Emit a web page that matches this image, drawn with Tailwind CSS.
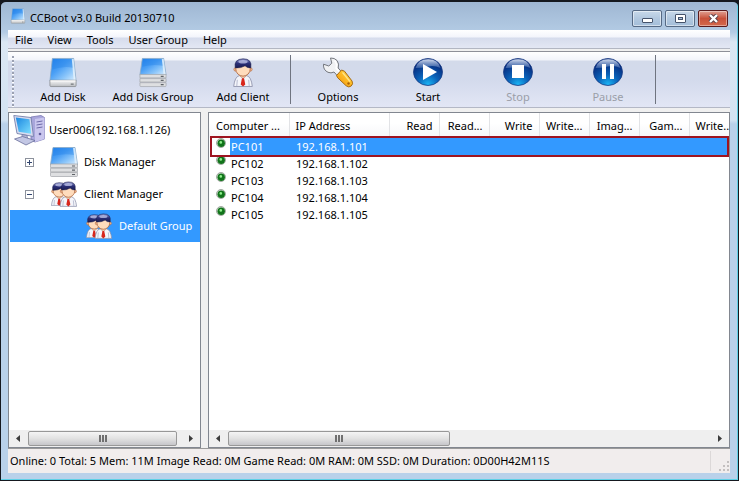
<!DOCTYPE html>
<html lang="en">

<head>
    <meta charset="UTF-8">
    <meta name="viewport" content="width=device-width, initial-scale=1.0">
    <title>CCBoot v3.0 Build 20130710</title>
    <script src="https://cdn.jsdelivr.net/npm/@tailwindcss/browser@4"></script>
</head>

<body class="bg-[#15181f] font-['Noto_Sans','Open_Sans',sans-serif] text-[11px] text-black">
    <!-- Shared icons -->
    <svg class="absolute h-0 w-0" aria-hidden="true">
        <defs>
            <linearGradient id="diskTop" x1="0" y1="0" x2="1" y2="1">
                <stop offset="0" stop-color="#1f80ec" />
                <stop offset=".4" stop-color="#4a9ff5" />
                <stop offset=".7" stop-color="#8cc6fa" />
                <stop offset="1" stop-color="#dcefff" />
            </linearGradient>
            <linearGradient id="diskFront" x1="0" y1="0" x2="0" y2="1">
                <stop offset="0" stop-color="#fafafa" />
                <stop offset="1" stop-color="#b9bcc0" />
            </linearGradient>
            <radialGradient id="orb" cx=".5" cy=".95" r=".8">
                <stop offset="0" stop-color="#19b4f4" />
                <stop offset=".45" stop-color="#0a62b8" />
                <stop offset="1" stop-color="#06297c" />
            </radialGradient>
            <linearGradient id="gloss" x1="0" y1="0" x2="0" y2="1">
                <stop offset="0" stop-color="#e8effa" stop-opacity=".9" />
                <stop offset="1" stop-color="#8fb0dc" stop-opacity=".35" />
            </linearGradient>
            <linearGradient id="hair" x1="0" y1="0" x2="0" y2="1">
                <stop offset="0" stop-color="#8c93cc" />
                <stop offset=".5" stop-color="#2b2f78" />
                <stop offset="1" stop-color="#1a1c50" />
            </linearGradient>
            <linearGradient id="handle" x1="0" y1="1" x2="1" y2="0">
                <stop offset="0" stop-color="#f08a00" />
                <stop offset=".6" stop-color="#ffc02a" />
                <stop offset="1" stop-color="#ffe07a" />
            </linearGradient>
            <linearGradient id="screen" x1="0" y1="0" x2="1" y2="1">
                <stop offset="0" stop-color="#1a86e0" />
                <stop offset="1" stop-color="#7fe0ff" />
            </linearGradient>
        </defs>
        <symbol id="disk" viewBox="0 0 30 32">
            <path d="M4 1.500h22l2.500 23h-27z" fill="url(#diskTop)" stroke="#8aa9c6" stroke-width=".8" />
            <path d="M24 2h2l2 22h-2z" fill="#e6f2fc" opacity=".8" />
            <path d="M5 2h19l1 9Q15 9 4 13z" fill="#1f7de6" opacity=".35" />
            <path d="M1.500 24h27v5.500q0 1-1 1h-25q-1 0-1-1z" fill="url(#diskFront)" stroke="#85888c" stroke-width=".8" />
            <path d="M2 24.600h26" stroke="#fff" />
            <path d="M23 28h3" stroke="#6c7075" stroke-width="1.200" />
        </symbol>
        <symbol id="disks" viewBox="0 0 30 32">
            <path d="M4 1.500h22l2.500 17h-27z" fill="url(#diskTop)" stroke="#8aa9c6" stroke-width=".8" />
            <path d="M24 2h2l2 16h-2z" fill="#e6f2fc" opacity=".8" />
            <path d="M5 2h19l1 7Q15 7 4 10z" fill="#1f7de6" opacity=".35" />
            <path d="M1.500 18h27v3.500h-27zM1.500 22.300h27v3.500h-27zM1.500 26.500h27v3q0 1-1 1h-25q-1 0-1-1z"
                fill="#dedfe1" stroke="#a2a5a9" stroke-width=".7" />
            <path d="M23 20h3M23 24.200h3M23 28.500h3" stroke="#5f6368" stroke-width="1.200" />
        </symbol>
        <symbol id="client" viewBox="0 0 20 28">
            <path d="M1 27.500Q2 18 6.500 17h7Q18 18 19 27.500z" fill="#f4f5fa" stroke="#8b8fa8" stroke-width=".8" />
            <path d="M4.500 21l-.5 6M15.500 21l.5 6" stroke="#a9aec6" stroke-width=".8" />
            <path d="M6.500 17l3.500 3 3.500-3" fill="#f7c9a6" stroke="#a98a80" stroke-width=".6" />
            <path d="M9 19.500h2l.4 2 .8 4-2.200 2-2.200-2 .8-4z" fill="#d8261c" />
            <circle cx="2.900" cy="11" r="1.700" fill="#f5bf98" stroke="#b0673c" stroke-width=".6" />
            <circle cx="17.100" cy="11" r="1.700" fill="#f5bf98" stroke="#b0673c" stroke-width=".6" />
            <ellipse cx="10" cy="10.500" rx="7" ry="7" fill="#ffdcbc" stroke="#b0673c" stroke-width=".8" />
            <path d="M2.500 9.500Q1 1 10 .8T17.500 9.500Q14 9.800 12 7.500 8 10 2.500 9.500z" fill="url(#hair)" stroke="#191b4c"
                stroke-width=".6" />
            <ellipse cx="10" cy="3.600" rx="4.500" ry="1.700" fill="#c9cdf0" opacity=".7" />
        </symbol>
        <symbol id="clients" viewBox="0 0 28 28">
            <use href="#client" x="0" y="1" width="18" height="25" />
            <use href="#client" x="9" y="0" width="19" height="27" />
        </symbol>
        <symbol id="orbBase" viewBox="0 0 30 28">
            <ellipse cx="15" cy="14" rx="14.500" ry="13.500" fill="url(#orb)" stroke="#1c3c84" stroke-width=".8" />
            <path d="M2.500 10Q5 1.500 15 1.300T27.500 10Q21 7 15 8.500T2.500 10z" fill="url(#gloss)" />
        </symbol>
        <symbol id="led" viewBox="0 0 10 10">
            <circle cx="5" cy="5" r="4.500" fill="#dfe6df" stroke="#8d978d" stroke-width=".8" />
            <circle cx="5.200" cy="5.200" r="3.700" fill="#11731a" />
            <circle cx="4.800" cy="4.400" r="1.300" fill="#8ff08c" />
        </symbol>
    </svg>

    <div
        class="flex h-screen flex-col rounded-t-[6px] border border-t-2 border-[#15181f] bg-[linear-gradient(#9fb7d3,#b3cbe4_30px,#dbe7f3_40px,#d3e3f2_118px,#b9d1ea_122px)] pr-2 pb-[7px] pl-[7px] shadow-[inset_-1px_-1px_0_#5fd0e6]">
        <!-- Title bar -->
        <header class="flex h-7 shrink-0 items-center">
            <svg class="ml-0.5 h-4 w-4"><use href="#disk" /></svg>
            <h1 class="ml-1 flex-1 pt-1">CCBoot v3.0 Build 20130710</h1>
            <div class="flex gap-[3px] self-start pt-2 pr-0.5">
                <button aria-label="Minimize"
                    class="flex h-[17px] w-[30px] items-center justify-center rounded-[2px] border border-[#566a85] bg-linear-to-b from-[#c8d9ea] via-[#b2c8df] via-50% to-[#a3bdd9] shadow-[inset_0_0_0_1px_#ffffff80]">
                    <svg class="mt-1 h-[5px] w-[11px]"><rect x=".5" y=".5" width="10" height="4" rx=".5" fill="#fff" stroke="#45536b" /></svg>
                </button>
                <button aria-label="Maximize"
                    class="flex h-[17px] w-[30px] items-center justify-center rounded-[2px] border border-[#566a85] bg-linear-to-b from-[#c8d9ea] via-[#b2c8df] via-50% to-[#a3bdd9] shadow-[inset_0_0_0_1px_#ffffff80]">
                    <svg class="h-[9px] w-[11px]">
                        <rect x=".5" y=".5" width="10" height="8" rx=".5" fill="#fff" stroke="#45536b" />
                        <rect x="3.500" y="3.500" width="4" height="2" fill="#a9c0da" stroke="#45536b" />
                    </svg>
                </button>
                <button aria-label="Close"
                    class="flex h-[17px] w-[30px] items-center justify-center rounded-[2px] border border-[#5a1a1c] bg-linear-to-b from-[#e0a093] via-[#c8513a] via-50% to-[#d4694c] shadow-[inset_0_0_0_1px_#ffffff66]">
                    <svg class="h-[9px] w-[11px]" viewBox="0 0 11 9">
                        <path d="M2 1l7 7M9 1L2 8" stroke="#5b4048" stroke-width="4.200" />
                        <path d="M2 1l7 7M9 1L2 8" stroke="#fff" stroke-width="2.400" />
                    </svg>
                </button>
            </div>
        </header>

        <div class="flex min-h-0 flex-1 flex-col bg-[#f0f0f0]">
            <!-- Menu -->
            <nav
                class="flex h-[19px] shrink-0 items-center gap-px border-b border-[#b2b6c2] bg-[linear-gradient(#ffffff,#f3f5fb_7px,#d6dcec_8px,#e3e7f4)] pt-0.5 leading-4">
                <a href="#" class="px-[7px]">File</a>
                <a href="#" class="px-[7px]">View</a>
                <a href="#" class="px-[7px]">Tools</a>
                <a href="#" class="px-[7px]">User Group</a>
                <a href="#" class="px-[7px]">Help</a>
            </nav>

            <!-- Toolbar -->
            <div
                class="mt-0.5 flex h-[57px] shrink-0 border-t border-b border-t-[#8e9098] border-b-[#b4b8c6] bg-[linear-gradient(#ffffff,#f2f4fa_8px,#d3daea_9px,#d3daec_28px,#e2e6f5)]">
                <div class="mt-1 mr-1 ml-1 w-[2px] bg-[repeating-linear-gradient(#9ba1b2_0_2px,#ffffff_2px_3px,transparent_3px_4px)]"></div>
                <button class="flex w-[90px] flex-col items-center pt-[5px] leading-4">
                    <svg class="mb-px h-[31px] w-[30px]"><use href="#disk" /></svg>Add Disk
                </button>
                <button class="flex w-[90px] flex-col items-center pt-[5px] leading-4 whitespace-nowrap">
                    <svg class="mb-px h-[31px] w-[30px]"><use href="#disks" /></svg>Add Disk Group
                </button>
                <button class="flex w-[90px] flex-col items-center pt-[5px] leading-4">
                    <svg class="mb-px h-[31px] w-[30px] py-px"><use href="#client" /></svg>Add Client
                </button>
                <div class="mx-0.5 my-[3px] w-px bg-[#6f7480]"></div>
                <button class="flex w-[90px] flex-col items-center pt-[5px] leading-4">
                    <svg class="mb-px h-[31px] w-[32px]" viewBox="0 0 32 31">
                        <path
                            d="M8.500 1L9.800 6.200 6.800 9 1.500 7.200Q1 13 6 15.300q3 1.300 6-.3l4.500 5 4-4-4.300-5Q17.500 7 15 3.500 12.500.8 8.500 1z"
                            fill="#f1f2f4" stroke="#74777e" />
                        <path d="M12.500 3.500q3 3 1.500 7.500l4.500 5" fill="none" stroke="#fff" stroke-width="1.500" />
                        <path d="M14.500 18.500l5-5.500 3 1.200L30 24q1.500 3-.8 5t-5-.2l-8.500-8z" fill="url(#handle)"
                            stroke="#a56b14" />
                        <path d="M20.500 15.500l7.500 9" stroke="#ffe58a" stroke-width="1.200" />
                        <circle cx="26.500" cy="26.500" r="1.200" fill="#a86008" />
                    </svg>Options
                </button>
                <button class="flex w-[90px] flex-col items-center pt-[5px] leading-4">
                    <svg class="mb-px h-[31px] w-[30px]" viewBox="0 0 30 31">
                        <use href="#orbBase" y="1" width="30" height="28" />
                        <path d="M10 7v16l14-8z" fill="#fff" />
                    </svg>Start
                </button>
                <button disabled class="flex w-[90px] flex-col items-center pt-[5px] leading-4 text-[#9a9ea8]">
                    <svg class="mb-px h-[31px] w-[30px]" viewBox="0 0 30 31">
                        <use href="#orbBase" y="1" width="30" height="28" />
                        <path d="M9 8h12v13H9z" fill="#fff" />
                    </svg>Stop
                </button>
                <button disabled class="flex w-[90px] flex-col items-center pt-[5px] leading-4 text-[#9a9ea8]">
                    <svg class="mb-px h-[31px] w-[30px]" viewBox="0 0 30 31">
                        <use href="#orbBase" y="1" width="30" height="28" />
                        <path d="M9 7h4v15H9zM17 7h4v15h-4z" fill="#fff" />
                    </svg>Pause
                </button>
                <div class="mx-0.5 my-[3px] w-px bg-[#6f7480]"></div>
            </div>

            <main class="mt-1 flex min-h-0 flex-1 gap-[7px]">
                <!-- Tree -->
                <aside class="flex w-[193px] shrink-0 flex-col border border-[#828790] bg-white">
                    <ul class="flex-1 pt-px pl-px leading-8 whitespace-nowrap">
                        <li class="flex h-8 items-center pl-[3px]">
                            <svg class="mr-1 h-8 w-8" viewBox="0 0 32 32">
                                <path d="M18 3l10-1.500 3.500 2V25L22 28l-4-2z" fill="#a9a6dc" stroke="#7a77b4" stroke-width=".8" />
                                <path d="M22 5v23l9.500-3V3.500z" fill="#c9c6ee" />
                                <path d="M23.500 8l6-1M23.500 11l6-1M23.500 14l6-1" stroke="#6e6aa8" />
                                <circle cx="27" cy="20" r="1.300" fill="#5e5a9c" />
                                <path d="M.8 1.500L18 3.500l2.500 19L4 19.500z" fill="#d8dcf0" stroke="#7580ac" stroke-width=".9" />
                                <path d="M2.800 3.500l13.700 1.800 1.700 14.500-12.500-2z" fill="url(#screen)" />
                                <path d="M9 20.500l5 1 1 4-6-1z" fill="#b5b8d8" stroke="#6a6e9a" stroke-width=".6" />
                                <path d="M1.500 25l8-2.500 12.500 4-9 4.500z" fill="#c3c7e4" stroke="#6a6e9a" stroke-width=".8" />
                            </svg>User006(192.168.1.126)
                        </li>
                        <li class="flex h-8 items-center pl-[15px]">
                            <button aria-label="Expand Disk Manager" class="mr-[15px] h-[9px] w-[9px]">
                                <svg class="block h-[9px] w-[9px]">
                                    <rect x=".5" y=".5" width="8" height="8" fill="#fff" stroke="#8c919c" />
                                    <path d="M2 4.500h5M4.500 2v5" stroke="#33466f" />
                                </svg>
                            </button>
                            <svg class="mr-[5px] h-8 w-[30px]"><use href="#disks" /></svg>Disk Manager
                        </li>
                        <li class="flex h-8 items-center pl-[15px]">
                            <button aria-label="Collapse Client Manager" class="mr-[15px] h-[9px] w-[9px]">
                                <svg class="block h-[9px] w-[9px]">
                                    <rect x=".5" y=".5" width="8" height="8" fill="#fff" stroke="#8c919c" />
                                    <path d="M2 4.500h5" stroke="#33466f" />
                                </svg>
                            </button>
                            <svg class="mr-[5px] h-[27px] w-[30px]"><use href="#clients" /></svg>Client Manager
                        </li>
                        <li class="flex h-8 items-center bg-[#3399ff] pl-[74px] text-white">
                            <svg class="mr-[5px] h-[27px] w-[30px]"><use href="#clients" /></svg>Default Group
                        </li>
                    </ul>
                    <div class="flex h-[17px] items-center bg-[#efefef] px-[7px]">
                        <svg class="h-[7px] w-1"><path d="M4 0v7L0 3.500z" fill="#3c3c3c" /></svg>
                        <div
                            class="ml-2 flex h-[15px] w-[149px] items-center justify-center gap-px rounded-[2px] border border-[#989898] bg-linear-to-b from-[#f5f5f5] via-[#e2e2e2] to-[#c6c6ca]">
                            <span class="h-[7px] w-0.5 bg-[#707070]"></span>
                            <span class="h-[7px] w-0.5 bg-[#707070]"></span>
                            <span class="h-[7px] w-0.5 bg-[#707070]"></span>
                        </div>
                        <svg class="ml-auto h-[7px] w-1"><path d="M0 0v7l4-3.500z" fill="#3c3c3c" /></svg>
                    </div>
                </aside>

                <!-- Client list -->
                <section class="relative flex min-w-0 flex-1 flex-col overflow-hidden border border-[#828790] bg-white">
                    <div class="flex-1 overflow-hidden">
                        <table class="w-[530px] table-fixed border-collapse text-left whitespace-nowrap">
                            <colgroup>
                                <col class="w-[21px]">
                                <col class="w-[59px]">
                                <col class="w-[100px]">
                                <col span="7" class="w-[50px]">
                            </colgroup>
                            <thead>
                                <tr class="h-[25px] bg-[linear-gradient(#ffffff,#ffffff_10px,#f5f6f8)] *:border-r *:border-[#e2e3e6] *:p-0 *:pt-0.5 *:font-normal">
                                    <th colspan="2"><span class="pl-[7px]">Computer ...</span></th>
                                    <th><span class="pl-1.5">IP Address</span></th>
                                    <th class="text-right"><span class="pr-1.5">Read</span></th>
                                    <th class="text-right"><span class="pr-1.5">Read...</span></th>
                                    <th class="text-right"><span class="pr-1.5">Write</span></th>
                                    <th class="text-right"><span class="pr-1.5">Write...</span></th>
                                    <th class="text-right"><span class="pr-1.5">Imag...</span></th>
                                    <th class="text-right"><span class="pr-1.5">Gam...</span></th>
                                    <th><span class="pl-1.5">Write..</span></th>
                                </tr>
                            </thead>
                            <tbody class="leading-4 [&_td]:p-0">
                                <tr class="h-[17px] text-white">
                                    <td class="align-top"><svg class="ml-[7px] h-[10px] w-[10px]"><use href="#led" /></svg></td>
                                    <td class="bg-[#3399ff]"><span class="pl-px">PC101</span></td>
                                    <td class="bg-[#3399ff]"><span class="pl-[7px]">192.168.1.101</span></td>
                                    <td colspan="7" class="bg-[#3399ff]"></td>
                                </tr>
                                <tr class="h-[17px]">
                                    <td class="align-top"><svg class="ml-[7px] h-[10px] w-[10px]"><use href="#led" /></svg></td>
                                    <td><span class="pl-px">PC102</span></td>
                                    <td><span class="pl-[7px]">192.168.1.102</span></td>
                                </tr>
                                <tr class="h-[17px]">
                                    <td class="align-top"><svg class="ml-[7px] h-[10px] w-[10px]"><use href="#led" /></svg></td>
                                    <td><span class="pl-px">PC103</span></td>
                                    <td><span class="pl-[7px]">192.168.1.103</span></td>
                                </tr>
                                <tr class="h-[17px]">
                                    <td class="align-top"><svg class="ml-[7px] h-[10px] w-[10px]"><use href="#led" /></svg></td>
                                    <td><span class="pl-px">PC104</span></td>
                                    <td><span class="pl-[7px]">192.168.1.104</span></td>
                                </tr>
                                <tr class="h-[17px]">
                                    <td class="align-top"><svg class="ml-[7px] h-[10px] w-[10px]"><use href="#led" /></svg></td>
                                    <td><span class="pl-px">PC105</span></td>
                                    <td><span class="pl-[7px]">192.168.1.105</span></td>
                                </tr>
                            </tbody>
                        </table>
                    </div>
                    <!-- Marks the selected client -->
                    <div class="absolute top-[23px] right-0 left-px h-[21px] border-2 border-[#9e1420]"></div>
                    <div class="flex h-[17px] items-center bg-[#efefef] px-[7px]">
                        <svg class="h-[7px] w-1"><path d="M4 0v7L0 3.500z" fill="#3c3c3c" /></svg>
                        <div
                            class="ml-2 flex h-[15px] w-[222px] items-center justify-center gap-px rounded-[2px] border border-[#989898] bg-linear-to-b from-[#f5f5f5] via-[#e2e2e2] to-[#c6c6ca]">
                            <span class="h-[7px] w-0.5 bg-[#707070]"></span>
                            <span class="h-[7px] w-0.5 bg-[#707070]"></span>
                            <span class="h-[7px] w-0.5 bg-[#707070]"></span>
                        </div>
                        <svg class="ml-auto h-[7px] w-1"><path d="M0 0v7l4-3.500z" fill="#3c3c3c" /></svg>
                    </div>
                </section>
            </main>

            <!-- Status bar -->
            <footer class="flex h-[25px] shrink-0 items-center border-t border-[#9a9a9a] bg-[#f1eded] pl-0.5">
                <p class="flex-1">Online: 0 Total: 5 Mem: 11M Image Read: 0M Game Read: 0M RAM: 0M SSD: 0M Duration: 0D00H42M11S</p>
                <div class="h-5 w-px bg-[#dcd8d8]"></div>
                <svg class="mr-px mb-0.5 ml-2 h-[10px] w-[10px] self-end" fill="#c3bfbf">
                    <path d="M8 0h2v2H8zM4 4h2v2H4zM8 4h2v2H8zM0 8h2v2H0zM4 8h2v2H4zM8 8h2v2H8z" />
                </svg>
            </footer>
        </div>
    </div>
</body>

</html>
